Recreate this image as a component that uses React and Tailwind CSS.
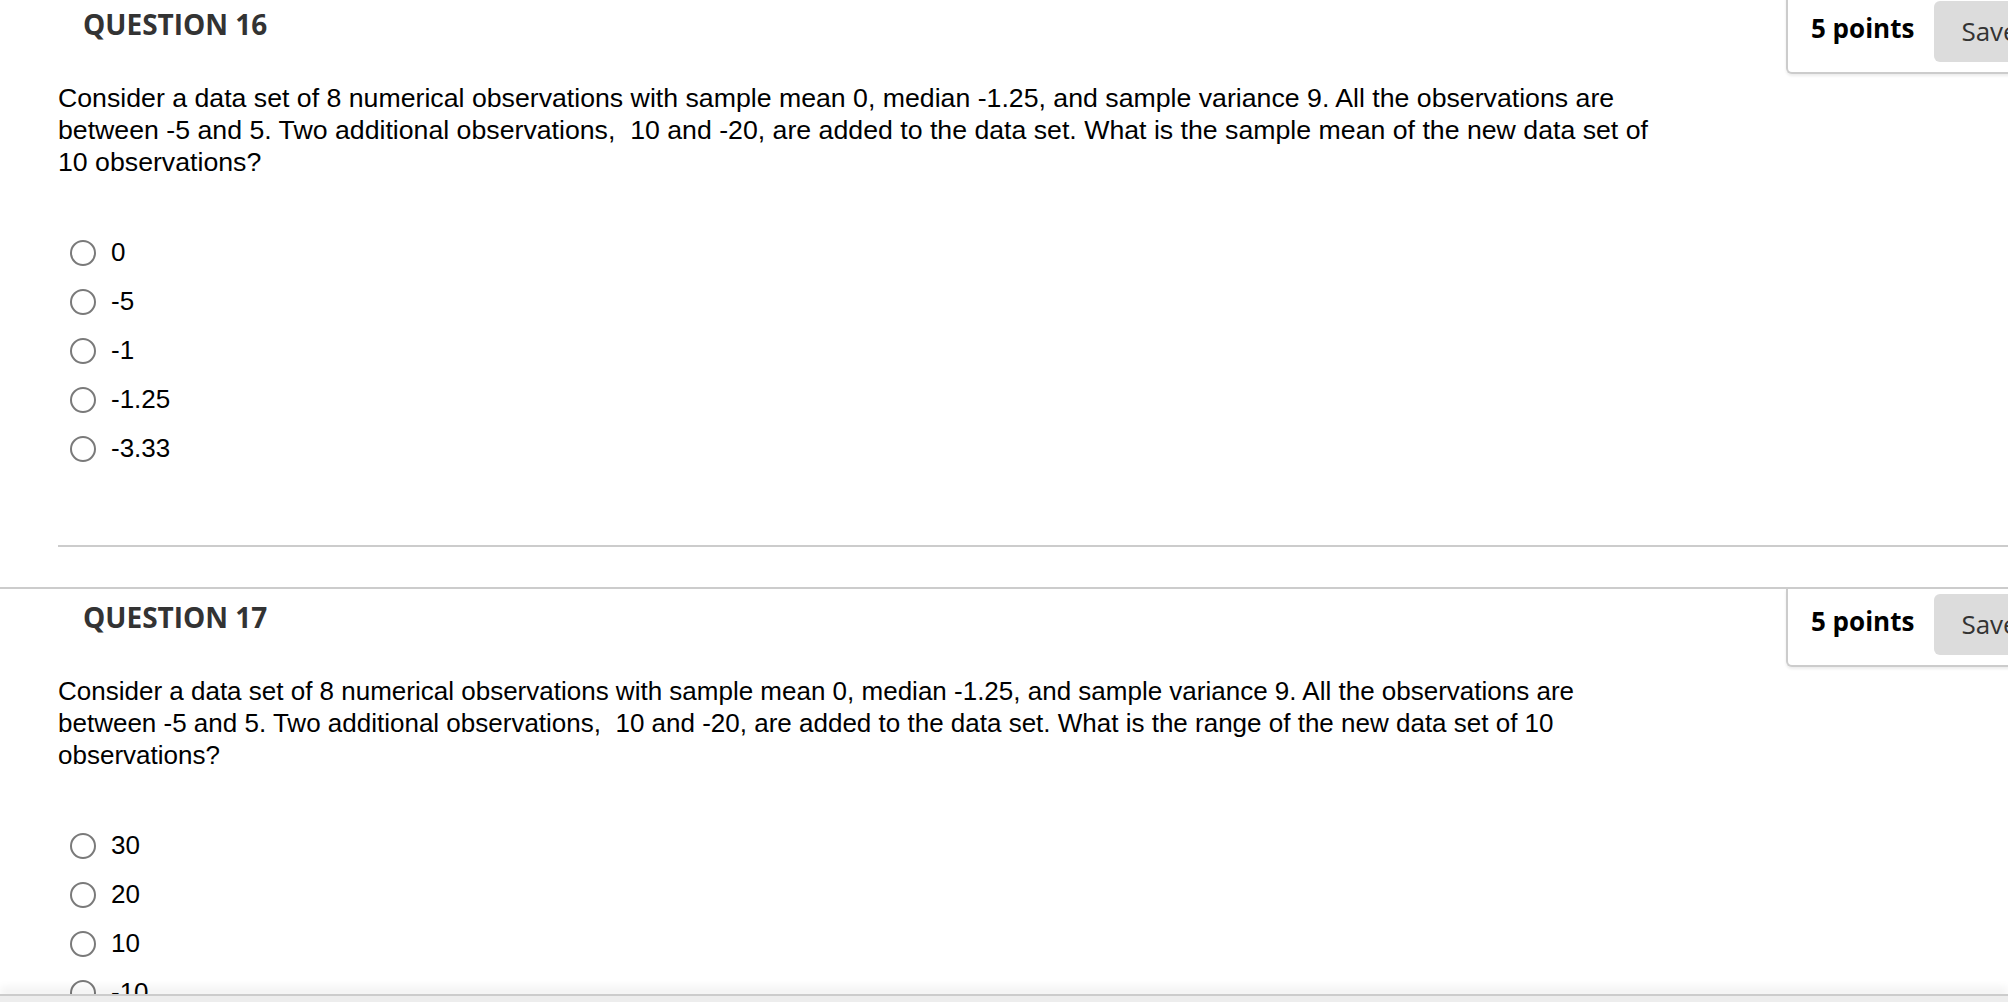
const questions = [
  {
    num: 16,
    size: "text-[26.7px]",
    text: "Consider a data set of 8 numerical observations with sample mean 0, median -1.25, and sample variance 9. All the observations are between -5 and 5. Two additional observations,  10 and -20, are added to the data set. What is the sample mean of the new data set of 10 observations?",
    options: ["0", "-5", "-1", "-1.25", "-3.33"],
  },
  {
    num: 17,
    size: "text-[26px]",
    text: "Consider a data set of 8 numerical observations with sample mean 0, median -1.25, and sample variance 9. All the observations are between -5 and 5. Two additional observations,  10 and -20, are added to the data set. What is the range of the new data set of 10 observations?",
    options: ["30", "20", "10", "-10"],
  },
];

function Question({ q, first }) {
  return (
    <div className={"border-t-2 border-[#cccccc] " + (first ? "-mt-[6px]" : "")}>
      <div className="flex justify-between items-start h-[78px]">
        <h2 className="pl-[83px] pt-[10px] text-[28px] leading-[36px] font-bold text-[#333333] font-['Open_Sans',sans-serif]">
          QUESTION {q.num}
        </h2>
        <div className="flex items-start h-[78px] w-[320px] -mr-[98px] pl-[23px] gap-[20px] border-l-2 border-b-2 border-[#cccccc] rounded-bl-[6px] bg-white shadow-[0_2px_3px_rgba(0,0,0,0.08)] font-['Open_Sans',sans-serif]">
          <span className="mt-[14px] text-[26px] leading-[36px] font-bold text-black whitespace-nowrap">5 points</span>
          <button className="mt-[5px] h-[61px] pl-[27px] pr-[30px] rounded-[6px] bg-[#dcdcdc] text-[26px] text-[#333333] whitespace-nowrap">
            Save Answer
          </button>
        </div>
      </div>
      <p className={"mt-[8px] pl-[58px] max-w-[1663px] leading-[32px] text-black whitespace-pre-wrap font-['Liberation_Sans',Arial,sans-serif] " + q.size}>
        {q.text}
      </p>
      <div className="mt-[50px] flex flex-col">
        {q.options.map((o) => (
          <label key={o} className="flex items-center h-[49px] pl-[70px] gap-[15px] text-[26px] text-black font-['Liberation_Sans',Arial,sans-serif]">
            <span className="w-[26px] h-[26px] rounded-full border-2 border-[#7a7a7a] bg-white shrink-0" />
            <span>{o}</span>
          </label>
        ))}
      </div>
      <div className="mt-[72px] ml-[58px] border-t-2 border-[#cccccc]" />
      <div className="h-[40px]" />
    </div>
  );
}

export default function App() {
  return (
    <div className="relative h-screen w-full overflow-hidden bg-white">
      {questions.map((q, i) => (
        <Question key={q.num} q={q} first={i === 0} />
      ))}
      <div className="fixed bottom-0 left-0 right-0 h-[8px] bg-[#ededed] border-t-2 border-[#cccccc] shadow-[0_-6px_10px_rgba(0,0,0,0.07)]" />
    </div>
  );
}
